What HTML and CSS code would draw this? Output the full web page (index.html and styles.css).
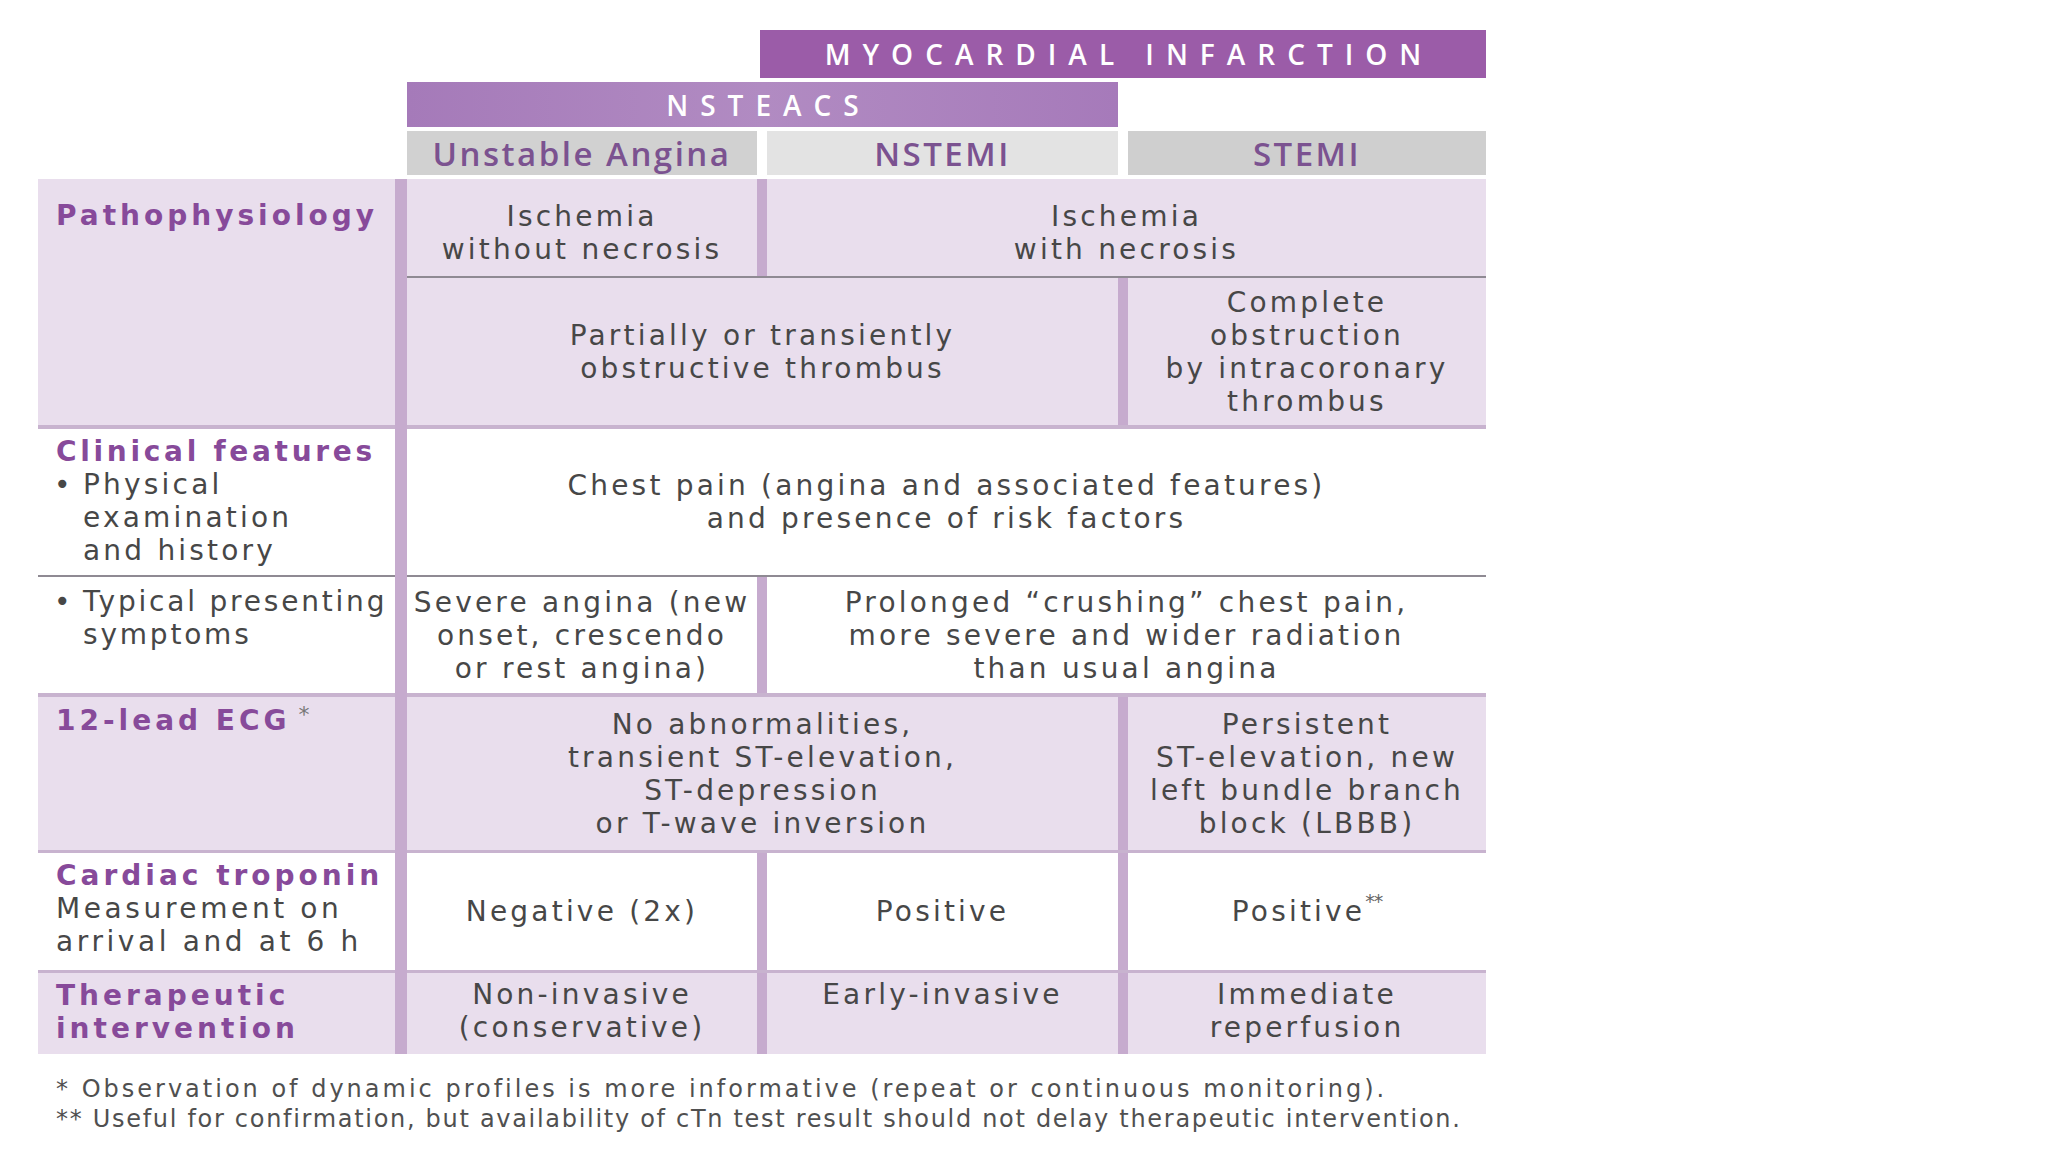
FILE: index.html
```html
<!DOCTYPE html>
<html lang="en">
<head>
<meta charset="utf-8">
<title>Myocardial infarction – ACS classification</title>
<link rel="stylesheet" href="styles.css">
</head>
<body>
<main class="page">
  <div class="heads">
    <div class="head head-mi">MYOCARDIAL INFARCTION</div>
    <div class="head head-nsteacs">NSTEACS</div>
    <div class="sub sub-ua">Unstable Angina</div>
    <div class="sub sub-nstemi">NSTEMI</div>
    <div class="sub sub-stemi">STEMI</div>
  </div>

  <div class="chart">
    <!-- Pathophysiology -->
    <div class="lab lab-patho tint r-a-b"><b>Pathophysiology</b></div>
    <div class="cell tint ra pad-a c1"><p>Ischemia<br>without necrosis</p></div>
    <div class="bar ra b1"></div>
    <div class="cell tint ra pad-a c23"><p>Ischemia<br>with necrosis</p></div>
    <div class="thin la c123"></div>
    <div class="cell tint rb c12"><p>Partially or transiently<br>obstructive thrombus</p></div>
    <div class="bar rb b2"></div>
    <div class="cell tint rb c3"><p>Complete<br>obstruction<br>by intracoronary<br>thrombus</p></div>
    <div class="thick l1"></div>

    <!-- Clinical features -->
    <div class="lab lab-clin rc"><b>Clinical features</b>
      <span class="bul">Physical<br>examination<br>and history</span></div>
    <div class="cell rc c123"><p>Chest pain (angina and associated features)<br>and presence of risk factors</p></div>
    <div class="thin lc lab-line"></div>
    <div class="thin lc c123"></div>
    <div class="lab lab-typ rd"><span class="bul">Typical presenting<br>symptoms</span></div>
    <div class="cell rd c1"><p>Severe angina (new<br>onset, crescendo<br>or rest angina)</p></div>
    <div class="bar rd b1"></div>
    <div class="cell rd c23"><p>Prolonged “crushing” chest pain,<br>more severe and wider radiation<br>than usual angina</p></div>
    <div class="thick l2"></div>

    <!-- ECG -->
    <div class="lab lab-ecg tint re"><b>12-lead ECG</b><sup class="ast">*</sup></div>
    <div class="cell tint re c12"><p>No abnormalities,<br>transient ST-elevation,<br>ST-depression<br>or T-wave inversion</p></div>
    <div class="bar re b2"></div>
    <div class="cell tint re c3"><p>Persistent<br>ST-elevation, new<br>left bundle branch<br>block (LBBB)</p></div>
    <div class="thick l3"></div>

    <!-- Troponin -->
    <div class="lab lab-trop rf"><b>Cardiac troponin</b><br>Measurement on<br>arrival and at 6 h</div>
    <div class="cell rf c1"><p>Negative (2x)</p></div>
    <div class="bar rf b1"></div>
    <div class="cell rf c2"><p>Positive</p></div>
    <div class="bar rf b2"></div>
    <div class="cell rf c3"><p>Positive<sup class="ast2">**</sup></p></div>
    <div class="thick l4"></div>

    <!-- Therapy -->
    <div class="lab lab-ther tint rg"><b>Therapeutic<br>intervention</b></div>
    <div class="cell top tint rg c1"><p>Non-invasive<br>(conservative)</p></div>
    <div class="bar rg b1"></div>
    <div class="cell top tint rg c2"><p>Early-invasive</p></div>
    <div class="bar rg b2"></div>
    <div class="cell top tint rg c3"><p>Immediate<br>reperfusion</p></div>

    <div class="bar labbar"></div>
  </div>

  <div class="notes">
    <p class="note-a">* Observation of dynamic profiles is more informative (repeat or continuous monitoring).</p>
    <p class="note-b">** Useful for confirmation, but availability of cTn test result should not delay therapeutic intervention.</p>
  </div>
</main>
</body>
</html>
```

FILE: styles.css
```css
html, body {
  margin: 0;
  padding: 0;
  background: #ffffff;
}

body {
  font-family: "DejaVu Sans", "Open Sans", sans-serif;
  color: #474747;
}

.page {
  padding: 30px 0 0 38px;
  width: 1448px;
}

/* shared column layout */
.heads,
.chart {
  display: grid;
  grid-template-columns: 357px 12px 350px 10px 351px 10px 358px;
}

.heads {
  grid-template-rows: 48px 45px 44px;
  row-gap: 4px;
  margin-bottom: 4px;
}

.head {
  font-family: "Open Sans", "DejaVu Sans", sans-serif;
  color: #ffffff;
  font-weight: 600;
  font-size: 28px;
  letter-spacing: 12px;
  padding-left: 12px;
  display: flex;
  align-items: center;
  justify-content: center;
}

.head-mi {
  grid-row: 1;
  grid-column: 5 / 8;
  margin-left: -7px;
  background: #9b5ca8;
}

.head-nsteacs {
  grid-row: 2;
  grid-column: 3 / 6;
  background: linear-gradient(90deg, #a57ab9 0%, #b18bc2 50%, #a67aba 100%);
}

.sub {
  grid-row: 3;
  font-family: "Open Sans", "DejaVu Sans", sans-serif;
  color: #7b5290;
  font-weight: 600;
  font-size: 33px;
  letter-spacing: 2.5px;
  display: flex;
  align-items: center;
  justify-content: center;
}

.sub-ua { grid-column: 3; background: #d1d1d1; }
.sub-nstemi { grid-column: 5; background: #e3e3e3; }
.sub-stemi { grid-column: 7; background: #cfcfcf; }

/* body grid */
.chart {
  grid-template-rows: 97px 2px 147px 4px 146px 2px 116px 4px 153px 3px 117px 3px 81px;
  font-size: 28px;
  line-height: 33px;
  letter-spacing: 3.2px;
}

.chart p { margin: 0; }

.tint { background: #e9deed; }

.cell {
  display: flex;
  flex-direction: column;
  justify-content: center;
  align-items: center;
  text-align: center;
}

.cell.top { justify-content: flex-start; padding-top: 5px; }
.pad-a { padding-top: 10px; }

.lab {
  grid-column: 1;
  padding: 6px 0 0 18px;
}

.lab b {
  color: #874a9a;
  font-weight: 700;
  letter-spacing: 4px;
}

.lab-patho { padding-top: 20px; }
.lab-clin b { letter-spacing: 3.7px; }
.lab-typ { padding-top: 8px; letter-spacing: 2.8px; }
.lab-ecg { padding-top: 7px; }
.lab-trop { letter-spacing: 3.6px; }

.bul {
  display: block;
  position: relative;
  padding-left: 27px;
}

.bul::before {
  content: "•";
  position: absolute;
  left: -2px;
  top: 0;
}

.ast {
  color: #777777;
  font-size: 22px;
  vertical-align: top;
  line-height: 1;
  margin-left: 8px;
  letter-spacing: 0;
}

.ast2 {
  color: #666666;
  font-size: 19px;
  vertical-align: top;
  line-height: 1;
  letter-spacing: -1px;
  position: relative;
  top: -3px;
}

/* rows */
.r-a-b { grid-row: 1 / 4; }
.ra { grid-row: 1; }
.la { grid-row: 2; }
.rb { grid-row: 3; }
.l1 { grid-row: 4; }
.rc { grid-row: 5; }
.lc { grid-row: 6; }
.rd { grid-row: 7; }
.l2 { grid-row: 8; }
.re { grid-row: 9; }
.l3 { grid-row: 10; }
.rf { grid-row: 11; }
.l4 { grid-row: 12; }
.rg { grid-row: 13; }

/* columns */
.c1 { grid-column: 3; }
.c2 { grid-column: 5; }
.c3 { grid-column: 7; }
.c12 { grid-column: 3 / 6; }
.c23 { grid-column: 5 / 8; }
.c123 { grid-column: 3 / 8; }
.b1 { grid-column: 4; }
.b2 { grid-column: 6; }
.lab-line { grid-column: 1; }

.bar { background: #c6abce; }

.labbar {
  grid-column: 2;
  grid-row: 1 / 14;
}

.thin { background: #8f8a93; }
.thick { background: #c8b3cf; grid-column: 1 / 8; }

/* footnotes */
.notes {
  margin-top: 20px;
  padding-left: 18px;
  font-size: 24px;
  line-height: 30px;
  color: #505050;
}

.notes p { margin: 0; white-space: nowrap; }
.note-a { letter-spacing: 3px; }
.note-b { letter-spacing: 1.7px; }
```
